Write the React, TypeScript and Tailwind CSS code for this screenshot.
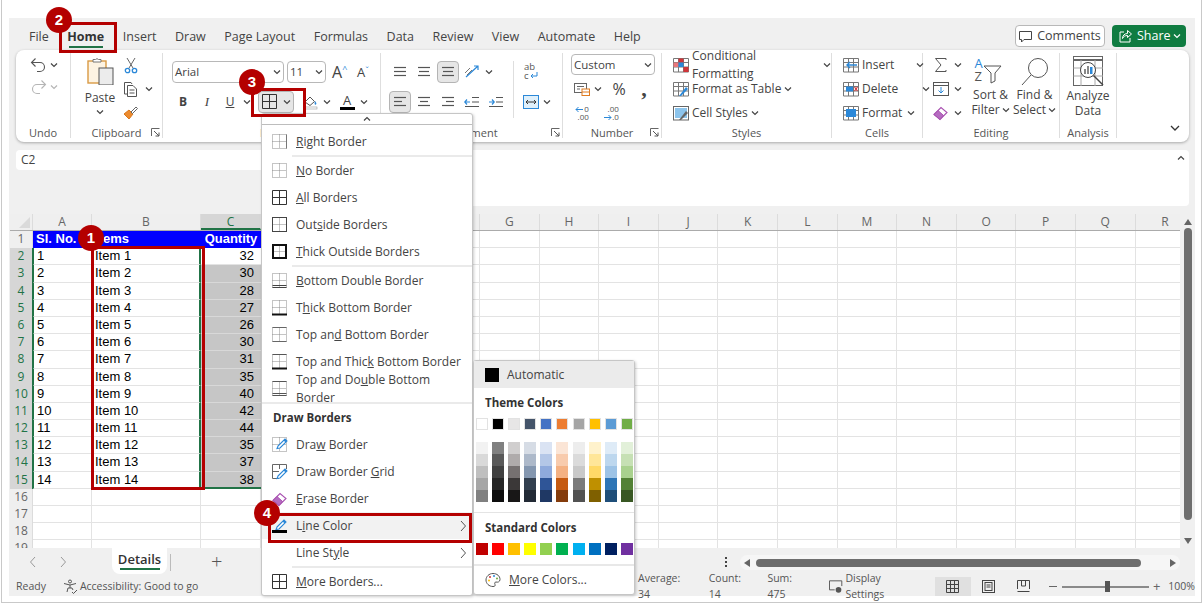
import type { ReactNode } from 'react';

const TABS = ['File', 'Home', 'Insert', 'Draw', 'Page Layout', 'Formulas', 'Data', 'Review', 'View', 'Automate', 'Help'];
const COLUMNS = [
  { name: 'A', width: 'w-[59px]' },
  { name: 'B', width: 'w-[109px]' },
  { name: 'C', width: 'w-[60px]' },
  { name: '', width: 'w-[219px]' },
  ...'GHIJKLMNOPQR'.split('').map((name) => ({ name, width: 'w-[59.6px]' })),
];
const QUANTITIES = [32, 30, 28, 27, 26, 30, 31, 35, 40, 42, 44, 35, 37, 38];

const THEME = ['#ffffff', '#000000', '#e7e6e6', '#44546a', '#4472c4', '#ed7d31', '#a5a5a5', '#ffc000', '#5b9bd5', '#70ad47'];
const SHADES = [
  ['#f2f2f2', '#d9d9d9', '#bfbfbf', '#a6a6a6', '#808080'],
  ['#808080', '#595959', '#404040', '#262626', '#0d0d0d'],
  ['#d0cece', '#afabab', '#767171', '#3b3838', '#181717'],
  ['#d6dce5', '#adb9ca', '#8497b0', '#323f4f', '#222a35'],
  ['#dae3f3', '#b4c7e7', '#8faadc', '#2f5597', '#1f3864'],
  ['#fbe5d6', '#f8cbad', '#f4b183', '#c55a11', '#843c0c'],
  ['#ededed', '#dbdbdb', '#c9c9c9', '#7b7b7b', '#525252'],
  ['#fff2cc', '#ffe699', '#ffd966', '#bf9000', '#7f6000'],
  ['#deebf7', '#bdd7ee', '#9dc3e6', '#2e75b6', '#1f4e79'],
  ['#e2f0d9', '#c6e0b4', '#a9d18e', '#538135', '#385723'],
];
const STANDARD = ['#c00000', '#ff0000', '#ffc000', '#ffff00', '#92d050', '#00b050', '#00b0f0', '#0070c0', '#002060', '#7030a0'];

const Chev = ({ dir = 'down', color = '#444' }: { dir?: 'down' | 'up' | 'right'; color?: string }) => {
  const d = dir === 'down' ? 'M1 2.5 4 5.5 7 2.5' : dir === 'up' ? 'M1 5.5 4 2.5 7 5.5' : 'M2.5 1 5.5 4 2.5 7';
  return (
    <svg width="8" height="8" viewBox="0 0 8 8" className="shrink-0">
      <path d={d} stroke={color} strokeWidth="1.2" fill="none" />
    </svg>
  );
};

const Launcher = () => (
  <svg width="9" height="9" viewBox="0 0 9 9">
    <path d="M.5 8V.5H8.5" stroke="#666" fill="none" />
    <path d="M3 3 8 8M8 4.5V8H4.5" stroke="#555" fill="none" />
  </svg>
);

const Dotted = ({ cross = true, box = true }: { cross?: boolean; box?: boolean }) => (
  <g stroke="#8a8a8a" strokeDasharray="1 1" fill="none">
    {box && <rect x=".5" y=".5" width="14" height="14" />}
    {cross && <path d="M7.5 .5V14.5M.5 7.5H14.5" />}
  </g>
);

const Pencil = ({ x = 0, y = 0 }: { x?: number; y?: number }) => (
  <g transform={`translate(${x} ${y})`}>
    <path d="M1 9 8 2l2 2-7 7-3 .6z" fill="#fff" stroke="#2b88d8" strokeWidth="1.1" />
    <path d="M6.6 3.4l2 2L10 4 8 2z" fill="#2b88d8" />
  </g>
);

const Eraser = () => (
  <svg width="16" height="16" viewBox="0 0 16 16">
    <path d="M1 9.5 8 2.5l6 5-7 7z" fill="#fff" stroke="#a84fb0" strokeWidth="1.1" />
    <path d="M1 9.5 5 5.5l5.5 5L7 14.5z" fill="#b56cc0" stroke="#a84fb0" />
  </svg>
);

const BorderIcon = ({ kind }: { kind: string }) => (
  <svg width="16" height="16" viewBox="0 0 16 16" className="shrink-0">
    {kind === 'right' && (<><Dotted /><path d="M14.5 .5V14.5" stroke="#777" /></>)}
    {kind === 'none' && <Dotted />}
    {kind === 'all' && <path d="M.5 .5H14.5V14.5H.5zM7.5 .5V14.5M.5 7.5H14.5" stroke="#333" fill="none" />}
    {kind === 'outside' && (<><Dotted box={false} /><rect x=".5" y=".5" width="14" height="14" stroke="#444" fill="none" /></>)}
    {kind === 'thick' && (<><Dotted box={false} /><rect x="1" y="1" width="13" height="13" stroke="#111" strokeWidth="2" fill="none" /></>)}
    {kind === 'bdouble' && (<><Dotted /><path d="M.5 12.5H14.5M.5 14.5H14.5" stroke="#444" /></>)}
    {kind === 'bthick' && (<><Dotted /><path d="M0 14.5H15" stroke="#111" strokeWidth="2" /></>)}
    {kind === 'tb' && (<><Dotted /><path d="M.5 .5H14.5M.5 14.5H14.5" stroke="#666" /></>)}
    {kind === 'tbthick' && (<><Dotted /><path d="M.5 .5H14.5" stroke="#555" /><path d="M0 14.5H15" stroke="#111" strokeWidth="2" /></>)}
    {kind === 'tbdouble' && (<><Dotted /><path d="M.5 .5H14.5M.5 12.5H14.5M.5 14.5H14.5" stroke="#555" /></>)}
    {kind === 'draw' && (<><Dotted /><Pencil x={5} y={0} /></>)}
    {kind === 'grid' && (<><path d="M.5 .5H14.5V14.5H.5zM7.5 .5V14.5M.5 7.5H14.5" stroke="#666" fill="none" /><rect x="7" y="5" width="9" height="11" fill="#fff" /><Pencil x={5} y={3} /></>)}
    {kind === 'color' && (<><Pencil x={4} y={0} /><rect x="0" y="12" width="15" height="3" fill="#000" /></>)}
  </svg>
);

const CellGridIcon = ({ children }: { children?: ReactNode }) => (
  <svg width="16" height="16" viewBox="0 0 16 16" className="shrink-0">
    <path d="M.5 1.5H15.5V15H.5zM.5 5.5H15.5M.5 10H15.5M5.5 1.5V15M10.5 1.5V15" stroke="#777" fill="none" />
    {children}
  </svg>
);

const Badge = ({ n, className }: { n: number; className: string }) => (
  <div className={`absolute flex h-[26px] w-[26px] items-center justify-center rounded-full bg-[#b40000] text-[15px] font-bold text-white font-['Liberation_Sans',sans-serif] ${className}`}>{n}</div>
);

const Slot = ({ w = 'w-[22px]', h = 'h-[22px]', active, children }: { w?: string; h?: string; active?: boolean; children: ReactNode }) => (
  <div className={`flex shrink-0 items-center justify-center rounded ${w} ${h} ${active ? 'border border-[#b4b4b4] bg-[#e6e6e6]' : ''}`}>{children}</div>
);

const Group = ({ width, label, launcher, className = '', children }: { width: string; label: string; launcher?: boolean; className?: string; children: ReactNode }) => (
  <div className={`relative flex h-[85px] shrink-0 flex-col border-r border-[#dedede] ${width}`}>
    <div className={`flex-1 ${className}`}>{children}</div>
    <div className="h-[10px] text-center text-[11px] leading-[10px] text-[#555]">{label}</div>
    {launcher && <div className="absolute bottom-[1px] right-[2px]"><Launcher /></div>}
  </div>
);

const Lines = ({ rows }: { rows: [number, number][] }) => (
  <svg width="16" height="16" viewBox="0 0 16 16">
    {rows.map(([x1, x2], i) => (
      <path key={i} d={`M${x1} ${3.5 + i * 4}H${x2}`} stroke="#555" strokeWidth="1.2" />
    ))}
  </svg>
);

const Select = ({ label, width, height = 'h-[22px]' }: { label: string; width: string; height?: string }) => (
  <div className={`flex shrink-0 items-center justify-between rounded-[4px] border border-[#b8b8b8] bg-white pl-[2px] pr-[2px] text-[11.5px] text-[#444] ${width} ${height}`}>
    <span>{label}</span>
    <Chev />
  </div>
);

const StyleRow = ({ icon, label, gap = 'ml-[3px]' }: { icon: ReactNode; label: string; gap?: string }) => (
  <div className="flex h-[24px] items-center text-[12px] text-[#444]">
    {icon}
    <span className="ml-[3px]">{label}</span>
    <span className={`${gap} flex`}><Chev /></span>
  </div>
);

const Ribbon = () => (
  <div className="ml-[7px] flex h-[92px] w-[1173px] items-start rounded-lg bg-white pt-[3px] shadow-[0_1px_3px_rgba(0,0,0,0.3)]">
    <Group width="w-[55px]" label="Undo" className="pt-[1px] pl-[14px]">
      <div className="flex h-[22px] items-center gap-[3px]">
        <svg width="17" height="17" viewBox="0 0 17 17"><path d="M5.5 1.5 1.5 5.5l4 4M1.5 5.5H10a4.5 4.5 0 0 1 0 9H7" stroke="#555" strokeWidth="1.1" fill="none" /></svg>
        <Chev />
      </div>
      <div className="flex h-[22px] items-center gap-[3px]">
        <svg width="17" height="17" viewBox="0 0 17 17"><path d="M11.5 1.5l4 4-4 4M15.5 5.5H7a4.5 4.5 0 0 0 0 9h3" stroke="#b5b5b5" strokeWidth="1.1" fill="none" /></svg>
        <Chev color="#b5b5b5" />
      </div>
    </Group>

    <Group width="w-[92px]" label="Clipboard" launcher className="flex pl-[6px]">
      <div className="flex w-[46px] flex-col items-center pt-[4px] text-[12px] leading-[15px] text-[#444]">
        <svg width="27" height="28" viewBox="0 0 27 28">
          <rect x="1" y="4" width="18" height="22" fill="#fdf3e2" stroke="#d99a45" strokeWidth="1.4" />
          <path d="M6 5V2.5h2.5a2 2 0 0 1 3 0H14V5z" fill="#fff" stroke="#777" />
          <rect x="12" y="11" width="14" height="17" fill="#ececec" stroke="#555" />
        </svg>
        <span className="mt-[5px]">Paste</span>
        <span className="mt-[3px]"><Chev /></span>
      </div>
      <div className="flex flex-col">
        <div className="flex h-[24px] w-[16px] items-center justify-center">
          <svg width="14" height="17" viewBox="0 0 14 17"><path d="M3 1l6 10M11 1 5 11" stroke="#666" fill="none" /><circle cx="3.5" cy="13.5" r="2.2" stroke="#2b88d8" strokeWidth="1.3" fill="none" /><circle cx="10.5" cy="13.5" r="2.2" stroke="#2b88d8" strokeWidth="1.3" fill="none" /></svg>
        </div>
        <div className="flex h-[24px] items-center gap-[6px]">
          <svg width="16" height="17" viewBox="0 0 16 17"><path d="M4 13H1.5V1.5H8L9 3" stroke="#555" fill="none" /><path d="M4.5 4.5H10L13.5 8V15.5H4.5zM6.5 9h5M6.5 12h5" stroke="#555" fill="#fff" /></svg>
          <Chev />
        </div>
        <div className="flex h-[24px] w-[16px] items-center justify-center">
          <svg width="16" height="16" viewBox="0 0 16 16"><path d="M1 9l5 5 4-5-4-4z" fill="#ed8b2e" stroke="#d9761a" /><path d="M8 7l5-5 1.5 1.5-5 5z" fill="#fff" stroke="#666" /></svg>
        </div>
      </div>
    </Group>

    <Group width="w-[218px]" label="Font" className="pl-[9px] pt-[8px]">
      <div className="flex h-[22px] items-center">
        <Select label="Arial" width="w-[112px]" />
        <span className="ml-[3px]"><Select label="11" width="w-[39px]" /></span>
        <span className="ml-[6px] flex w-[22px] items-start text-[16px] leading-none text-[#444]">A<span className="text-[9px] text-[#2b88d8]">^</span></span>
        <span className="ml-[3px] flex w-[22px] items-start text-[13px] leading-none text-[#444]">A<span className="text-[9px] text-[#2b88d8]">ˇ</span></span>
      </div>
      <div className="mt-[8px] flex h-[22px] items-center">
        <Slot><span className="text-[12px] font-bold text-[#444]">B</span></Slot>
        <span className="w-[2px]" />
        <Slot><span className="font-['Liberation_Serif',serif] text-[13px] italic text-[#444]">I</span></Slot>
        <span className="w-[1px]" />
        <Slot><span className="text-[12px] text-[#444] underline">U</span></Slot>
        <span className="ml-[2px] mr-[7px] flex"><Chev /></span>
        <div className="flex h-[22px] w-[36px] items-center justify-center gap-[5px] rounded border border-[#b4b4b4] bg-[#e6e6e6]">
          <BorderIcon kind="all" />
          <Chev />
        </div>
        <span className="w-[6px]" />
        <Slot>
          <svg width="16" height="16" viewBox="0 0 16 16"><path d="M2 8l5-5 4.5 4.5L7 11.5z" fill="#fff" stroke="#555" /><path d="M12 7c1 1.5 2 2.5 1 3.5s-2-.5-1-3.5z" fill="#2b88d8" /><rect x="1" y="13" width="13" height="2" fill="#fff" stroke="#999" strokeWidth=".6" /></svg>
        </Slot>
        <span className="flex w-[10px] justify-center"><Chev /></span>
        <span className="w-[4px]" />
        <Slot>
          <div className="flex flex-col items-center leading-none">
            <span className="text-[13px] leading-[12px] text-[#444]">A</span>
            <span className="mt-[1px] h-[3px] w-[15px] bg-black" />
          </div>
        </Slot>
        <span className="ml-[2px] flex"><Chev /></span>
      </div>
    </Group>

    <Group width="w-[182px]" label="Alignment" launcher className="flex pl-[8px] pt-[8px]">
      <div className="h-[57px] w-[125px] border-r border-[#dedede]">
        <div className="flex h-[22px] items-center gap-[2px]">
          <Slot><Lines rows={[[2, 14], [2, 14], [2, 14]]} /></Slot>
          <Slot><Lines rows={[[2, 14], [3, 13], [2, 14]]} /></Slot>
          <Slot active><Lines rows={[[2, 14], [3, 13], [2, 14]]} /></Slot>
          <Slot>
            <svg width="18" height="16" viewBox="0 0 18 16"><path d="M3 13 15 2M11 2h4v4" stroke="#2b88d8" strokeWidth="1.2" fill="none" /><path d="M2 9 7 4M4 11l5-5" stroke="#777" /></svg>
          </Slot>
          <Chev />
        </div>
        <div className="mt-[8px] flex h-[22px] items-center gap-[2px]">
          <Slot active><Lines rows={[[2, 14], [2, 10], [2, 14]]} /></Slot>
          <Slot><Lines rows={[[2, 14], [4, 12], [2, 14]]} /></Slot>
          <Slot><Lines rows={[[2, 14], [6, 14], [2, 14]]} /></Slot>
          <Slot>
            <svg width="16" height="16" viewBox="0 0 16 16"><path d="M8 3.5H15M8 8H15M1 12.5H15" stroke="#555" /><path d="M6 8H1M3 5.5 .8 8 3 10.5" stroke="#2b88d8" fill="none" strokeWidth="1.2" /></svg>
          </Slot>
          <Slot>
            <svg width="16" height="16" viewBox="0 0 16 16"><path d="M8 3.5H15M8 8H15M1 12.5H15" stroke="#555" /><path d="M1 8H6M4 5.5 6.2 8 4 10.5" stroke="#2b88d8" fill="none" strokeWidth="1.2" /></svg>
          </Slot>
        </div>
      </div>
      <div className="pl-[6px]">
        <Slot>
          <div className="relative flex h-[22px] w-[18px] flex-col text-[9.5px] leading-[8px] text-[#555]">
            <span className="pt-[2px] pl-[2px]">ab</span>
            <span className="flex items-center pt-[1px] pl-[2px]">c<svg width="9" height="8" viewBox="0 0 9 8"><path d="M8 0V4H2M4 2 2 4l2 2" stroke="#2b88d8" fill="none" /></svg></span>
          </div>
        </Slot>
        <div className="mt-[8px] flex h-[22px] items-center gap-[1px]">
          <Slot>
            <svg width="16" height="16" viewBox="0 0 16 16"><rect x=".5" y="1.5" width="15" height="13" fill="#dff0fb" stroke="#2b88d8" /><path d="M3 8h10M5 6 3 8l2 2M11 6l2 2-2 2" stroke="#333" fill="none" /></svg>
          </Slot>
          <Chev />
        </div>
      </div>
    </Group>

    <Group width="w-[99px]" label="Number" launcher className="pl-[8px] pt-[1px]">
      <Select label="Custom" width="w-[84px]" height="h-[21px]" />
      <div className="mt-[2px] flex h-[24px] items-center">
        <Slot>
          <svg width="16" height="14" viewBox="0 0 16 14"><rect x=".5" y="1.5" width="12" height="9" fill="none" stroke="#666" /><rect x="8" y="7" width="7.5" height="6.5" fill="#fff" stroke="#e07b1f" /><path d="M8 10h7" stroke="#e07b1f" /><path d="M3 4.500h7M3 7h3" stroke="#666" /></svg>
        </Slot>
        <span className="flex w-[10px] justify-center"><Chev /></span>
        <span className="ml-[5px]"><Slot><span className="text-[16px] text-[#444]">%</span></Slot></span>
        <span className="ml-[3px]"><Slot><span className="font-['Liberation_Serif',serif] text-[22px] font-bold leading-[12px] text-[#444]">,</span></Slot></span>
      </div>
      <div className="flex h-[24px] items-center gap-[7px]">
        <Slot>
          <div className="flex flex-col items-end text-[8px] leading-[8px] text-[#555]">
            <span className="flex items-center"><svg width="9" height="7" viewBox="0 0 9 7"><path d="M8 3.500H1M3.500 1 1 3.500 3.500 6" stroke="#2b88d8" fill="none" /></svg>0</span>
            <span>.00</span>
          </div>
        </Slot>
        <Slot>
          <div className="flex flex-col items-end text-[8px] leading-[8px] text-[#555]">
            <span>.00</span>
            <span className="flex items-center"><svg width="9" height="7" viewBox="0 0 9 7"><path d="M1 3.500H8M5.500 1 8 3.500 5.500 6" stroke="#2b88d8" fill="none" /></svg>.0</span>
          </div>
        </Slot>
      </div>
    </Group>

    <Group width="w-[170px]" label="Styles" className="pl-[11px]">
      <StyleRow label="Conditional Formatting" icon={<CellGridIcon><rect x="5.5" y="1.5" width="5" height="4" fill="#d13438" /><rect x=".5" y="5.5" width="5" height="4.5" fill="#e8767a" /><rect x="10.5" y="10" width="5" height="5" fill="#d13438" /><rect x="5.5" y="5.5" width="5" height="4.5" fill="#2b88d8" /></CellGridIcon>} />
      <StyleRow label="Format as Table" icon={<CellGridIcon><path d="M6 15 13 6l2 2-7 7z" fill="#2b88d8" /></CellGridIcon>} />
      <StyleRow label="Cell Styles" icon={<svg width="16" height="16" viewBox="0 0 16 16"><rect x=".5" y="1.5" width="15" height="13.5" fill="#fff" stroke="#666" /><rect x="2" y="3" width="12" height="10" fill="#8cc4ec" /><path d="M6 15 13 6l2 2-7 7z" fill="#666" /></svg>} />
    </Group>

    <Group width="w-[91px]" label="Cells" className="pl-[11px]">
      <StyleRow label="Insert" gap="ml-[22px]" icon={<CellGridIcon><path d="M14 8H4M7 5 4 8l3 3" stroke="#2b88d8" strokeWidth="1.4" fill="none" /></CellGridIcon>} />
      <StyleRow label="Delete" gap="ml-[24px]" icon={<CellGridIcon><rect x="3" y="5.5" width="7" height="5" fill="#2b88d8" /><path d="M11.5 6l3 4M14.5 6l-3 4" stroke="#d13438" strokeWidth="1.2" /></CellGridIcon>} />
      <StyleRow label="Format" gap="ml-[5px]" icon={<CellGridIcon><rect x="3" y="4" width="10" height="8" fill="#2b88d8" /></CellGridIcon>} />
    </Group>

    <Group width="w-[137px]" label="Editing" className="flex pl-[10px] text-[12px] leading-[15px] text-[#444]">
      <div className="flex w-[35px] flex-col">
        <div className="flex h-[24px] items-center gap-[5px]">
          <svg width="16" height="16" viewBox="0 0 16 16"><path d="M13 3V1.500H2.500L8 8l-5.500 6.500H13V13" stroke="#555" fill="none" /></svg>
          <Chev />
        </div>
        <div className="flex h-[24px] items-center gap-[5px]">
          <svg width="16" height="16" viewBox="0 0 16 16"><rect x=".5" y="1.5" width="15" height="13" fill="none" stroke="#555" /><path d="M.5 4.5H15.5" stroke="#555" /><path d="M8 6v6M5.500 9.500 8 12l2.500-2.500" stroke="#2b88d8" fill="none" /></svg>
          <Chev />
        </div>
        <div className="flex h-[24px] items-center gap-[5px]">
          <Eraser />
          <Chev />
        </div>
      </div>
      <div className="flex w-[45px] flex-col items-center pt-[4px]">
        <div className="flex h-[30px] w-[32px] items-start">
          <div className="flex flex-col text-[13px] leading-[13px]">
            <span className="text-[#2b88d8]">A</span>
            <span className="text-[#555]">Z</span>
          </div>
          <svg width="20" height="20" viewBox="0 0 20 20" className="mt-[7px]"><path d="M1 2H18L12 9V17L8 19V9z" fill="none" stroke="#555" /></svg>
        </div>
        <span>Sort &amp;</span>
        <span className="flex items-center gap-[2px]">Filter <Chev /></span>
      </div>
      <div className="flex w-[43px] flex-col items-center pt-[4px]">
        <svg width="30" height="30" viewBox="0 0 30 30"><circle cx="18" cy="11" r="9.5" fill="none" stroke="#555" /><path d="M11 18 2 28" stroke="#555" /></svg>
        <span>Find &amp;</span>
        <span className="flex items-center gap-[2px]">Select <Chev /></span>
      </div>
    </Group>

    <Group width="w-[57px]" label="Analysis" className="flex flex-col items-center pt-[3px] text-[12px] leading-[15px] text-[#444]">
      <svg width="31" height="31" viewBox="0 0 31 31">
        <rect x=".5" y=".5" width="29" height="29" fill="#fff" stroke="#666" />
        <path d="M.5 4H29.5" stroke="#666" strokeWidth="2" />
        <path d="M.5 12H30M.5 20H30M8 4V30M22 4V30" stroke="#aaa" />
        <circle cx="15" cy="14" r="7.5" fill="#fff" stroke="#444" />
        <rect x="11" y="13" width="2" height="5" fill="#888" /><rect x="14" y="10" width="2" height="8" fill="#888" /><rect x="17" y="11" width="2.5" height="7" fill="#2b88d8" />
        <path d="M20.5 19.5 30 29" stroke="#444" strokeWidth="1.4" />
      </svg>
      <span className="mt-[1px]">Analyze</span>
      <span>Data</span>
    </Group>

    <div className="flex h-[85px] flex-1 items-end justify-end pr-[9px] pb-[5px]">
      <svg width="10" height="10" viewBox="0 0 10 10"><path d="M1 3 5 7l4-4" stroke="#333" strokeWidth="1.3" fill="none" /></svg>
    </div>
  </div>
);

const Sheet = () => (
  <div className="mt-[8px] flex h-[334px]">
    <div className="h-full w-[1px] shrink-0" />
    <div className="h-full w-[1170px] overflow-hidden bg-white">
      <div className="flex h-[17px] w-[1200px] border-b border-[#ababab] bg-[#efefef] text-[12px] leading-[16px] text-[#666]">
        <div className="flex w-[23px] shrink-0 items-end justify-end border-r border-[#dcdcdc] pr-[2px] pb-[2px]">
          <svg width="11" height="11" viewBox="0 0 11 11"><path d="M11 0V11H0z" fill="#dadada" /></svg>
        </div>
        {COLUMNS.map((c) => (
          <div key={c.name} className={`${c.width} shrink-0 border-r border-[#dcdcdc] text-center ${c.name === 'C' ? 'border-b-2 border-b-[#217346] bg-[#d6d6d6] text-[#217346]' : ''}`}>{c.name}</div>
        ))}
      </div>
      {Array.from({ length: 19 }, (_, i) => {
        const row = i + 1;
        const selected = row >= 2 && row <= 15;
        const header = row === 1;
        return (
          <div key={row} className="flex h-[17.2px] w-[1200px] font-['Liberation_Sans',Arial,sans-serif] text-[13px] leading-[16px] text-black">
            <div className={`w-[23px] shrink-0 border-r text-center font-['Open_Sans',sans-serif] text-[12px] ${selected ? 'border-r-[#217346] bg-[#d6d6d6] text-[#217346]' : 'border-r-[#dcdcdc] bg-[#efefef] text-[#666]'}`}>{row}</div>
            {COLUMNS.map((c, ci) => {
              let tone = 'border-b border-r border-[#e3e3e3]';
              if (header && ci < 3) tone = 'bg-[#0000ff] text-white font-bold';
              if (ci === 0 && selected) tone = 'border-b border-r border-[#e3e3e3] border-l border-l-[#217346]';
              if (ci === 1 && selected) tone = 'border-b border-r-2 border-[#e3e3e3] border-r-[#217346]';
              if (ci === 2 && selected) tone = row === 2 ? 'border-b border-[#e3e3e3]' : 'bg-[#c6c6c6] border-b border-[#d8d8d8]';
              if (ci === 2 && row === 15) tone = 'bg-[#c6c6c6] border-b-2 border-[#217346]';
              let text: string | number = '';
              if (header) text = ['Sl. No.', 'Items', 'Quantity'][ci] ?? '';
              else if (selected && ci === 0) text = row - 1;
              else if (selected && ci === 1) text = `Item ${row - 1}`;
              else if (selected && ci === 2) text = QUANTITIES[row - 2];
              const align = ci === 2 ? (header ? 'text-center' : 'pr-[7px] text-right') : 'pl-[3px]';
              return <div key={c.name} className={`${c.width} shrink-0 ${align} ${tone}`}>{text}</div>;
            })}
          </div>
        );
      })}
    </div>
    <div className="flex h-full w-[15px] flex-col items-center">
      <div className="mt-[5px] h-0 w-0 border-x-[4px] border-b-[6px] border-x-transparent border-b-[#666]" />
      <div className="mt-[3px] h-[292px] w-[8px] rounded-full bg-[#6e6e6e]" />
      <div className="mt-auto mb-[4px] h-0 w-0 border-x-[4px] border-t-[6px] border-x-transparent border-t-[#666]" />
    </div>
  </div>
);

const TabBar = () => (
  <div className="flex h-[29px] items-start">
    <div className="flex h-[28px] w-[731px] shrink-0 items-center">
      <span className="ml-[20px] flex"><svg width="8" height="12" viewBox="0 0 8 12"><path d="M6 1 1.5 6 6 11" stroke="#999" fill="none" /></svg></span>
      <span className="ml-[22px] flex"><svg width="8" height="12" viewBox="0 0 8 12"><path d="M2 1l4.5 5L2 11" stroke="#999" fill="none" /></svg></span>
      <div className="ml-[45px] flex h-[26px] w-[55px] -translate-y-px flex-col items-center rounded-b-lg bg-white pt-[3px] text-[13px] font-semibold leading-[16px] text-[#333]">
        Details
        <span className="mt-[1px] h-[2px] w-[40px] bg-[#217346]" />
      </div>
      <span className="ml-[3px] h-[17px] w-px bg-[#bbb]" />
      <span className="ml-[40px] text-[20px] font-light leading-none text-[#555]">+</span>
      <div className="ml-auto mr-[13px] flex flex-col gap-[2px]">
        <span className="h-[2px] w-[2px] bg-[#444]" />
        <span className="h-[2px] w-[2px] bg-[#444]" />
        <span className="h-[2px] w-[2px] bg-[#444]" />
      </div>
    </div>
    <div className="mt-[7px] flex h-[15px] w-[440px] items-center rounded-full bg-[#f6f6f6] px-[4px]">
      <div className="h-0 w-0 border-y-[4px] border-r-[6px] border-y-transparent border-r-[#666]" />
      <div className="ml-[6px] h-[8px] w-[385px] rounded-full bg-[#6e6e6e]" />
      <div className="ml-auto h-0 w-0 border-y-[4px] border-l-[6px] border-y-transparent border-l-[#666]" />
    </div>
  </div>
);

const StatusBar = () => (
  <div className="flex h-[19px] items-center text-[10.5px] text-[#555]">
    <span className="ml-[7px]">Ready</span>
    <span className="ml-[17px] flex items-center gap-[2px]">
      <svg width="15" height="15" viewBox="0 0 15 15"><circle cx="7" cy="2.5" r="1.5" fill="none" stroke="#555" /><path d="M1 4.500 7 6l6-1.500M7 6v3M4 13l1-4h4l1 2M9 13l1.500 1.500L14 11" stroke="#555" fill="none" /></svg>
      Accessibility: Good to go
    </span>
    <div className="ml-auto flex h-full w-[557px] items-center">
      <span>Average:&nbsp; 34</span>
      <span className="ml-[14px]">Count: 14</span>
      <span className="ml-[14px]">Sum:&nbsp; 475</span>
      <span className="ml-[16px] flex items-center gap-[2px]">
        <svg width="15" height="14" viewBox="0 0 15 14"><path d="M6 10H.5V.5H13.5V6" stroke="#555" fill="none" /><circle cx="10" cy="10" r="3" fill="#555" /></svg>
        Display Settings
      </span>
      <div className="ml-[16px] flex h-full w-[38px] items-center justify-center bg-[#e0e0e0]">
        <svg width="13" height="13" viewBox="0 0 13 13"><path d="M.5 .5H12.5V12.5H.5zM4.500 .5V12.500M8.500 .5V12.500M.5 4.500H12.500M.5 8.500H12.500" stroke="#444" fill="none" /></svg>
      </div>
      <div className="flex w-[37px] justify-center">
        <svg width="13" height="13" viewBox="0 0 13 13"><rect x=".5" y=".5" width="12" height="12" stroke="#444" fill="none" /><rect x="3" y="2.5" width="7" height="8" stroke="#444" fill="none" /><path d="M4.500 5H8.500M4.500 7H8.500" stroke="#444" /></svg>
      </div>
      <div className="flex w-[37px] justify-center">
        <svg width="13" height="13" viewBox="0 0 13 13"><path d="M.5 9V.5H12.500V9M.5 11.500H12.500M4.500 .5V6H8.500V.5" stroke="#444" fill="none" /></svg>
      </div>
      <span className="ml-[8px] h-px w-[8px] bg-[#666]" />
      <div className="relative ml-[5px] h-[2px] w-[92px] bg-[#8a8a8a]">
        <span className="absolute left-[43px] top-[-5px] h-[11px] w-[5px] bg-[#555]" />
      </div>
      <span className="ml-[4px] text-[13px] leading-none text-[#666]">+</span>
      <span className="ml-[8px]">100%</span>
    </div>
  </div>
);

const Underlined = ({ label }: { label: string }) => {
  const [before, after] = label.split('&');
  if (after === undefined) return <>{label}</>;
  return (<>{before}<u>{after[0]}</u>{after.slice(1)}</>);
};

const MenuItem = ({ kind, label, hover, arrow }: { kind?: string; label: string; hover?: boolean; arrow?: boolean }) => (
  <div className={`flex h-[27px] shrink-0 items-center pl-[10px] pr-[5px] text-[12px] text-[#444] ${hover ? 'bg-[#f2f2f2]' : ''}`}>
    <span className="flex w-[24px] shrink-0">
      {kind === 'erase' ? <Eraser /> : kind ? <BorderIcon kind={kind} /> : null}
    </span>
    <span><Underlined label={label} /></span>
    {arrow && <span className="ml-auto"><svg width="8" height="12" viewBox="0 0 8 12"><path d="M2 1l4.500 5L2 11" stroke="#555" fill="none" /></svg></span>}
  </div>
);

const MenuSep = ({ full }: { full?: boolean }) => (
  <div className={`h-[2px] shrink-0 bg-[#eaeaea] ${full ? '' : 'ml-[30px]'}`} />
);

const BorderMenu = () => (
  <div className="absolute left-[261px] top-[113px] flex h-[483px] w-[212px] flex-col rounded-[3px] border border-[#c6c6c6] bg-white font-['Open_Sans',sans-serif] shadow-[1px_1px_3px_rgba(0,0,0,0.2)]">
    <div className="flex h-[11px] shrink-0 items-center justify-center border-b border-[#bdbdbd]"><Chev dir="up" /></div>
    <div className="h-[3px] shrink-0" />
    <MenuItem kind="right" label="&Right Border" />
    <MenuSep />
    <MenuItem kind="none" label="&No Border" />
    <MenuItem kind="all" label="&All Borders" />
    <MenuItem kind="outside" label="Out&side Borders" />
    <MenuItem kind="thick" label="&Thick Outside Borders" />
    <MenuSep />
    <MenuItem kind="bdouble" label="&Bottom Double Border" />
    <MenuItem kind="bthick" label="T&hick Bottom Border" />
    <MenuItem kind="tb" label="Top an&d Bottom Border" />
    <MenuItem kind="tbthick" label="Top and Thic&k Bottom Border" />
    <MenuItem kind="tbdouble" label="Top and Do&uble Bottom Border" />
    <MenuSep full />
    <div className="flex h-[27px] shrink-0 items-center pl-[11px] text-[11.5px] font-bold text-[#333]">Draw Borders</div>
    <MenuItem kind="draw" label="Dra&w Border" />
    <MenuItem kind="grid" label="Draw Border &Grid" />
    <MenuItem kind="erase" label="&Erase Border" />
    <MenuItem kind="color" label="L&ine Color" hover arrow />
    <MenuItem label="Line St&yle" arrow />
    <MenuSep />
    <MenuItem kind="all" label="&More Borders..." />
  </div>
);

const ColorMenu = () => (
  <div className="absolute left-[473px] top-[360px] h-[235px] w-[162px] rounded-[3px] border border-[#c6c6c6] bg-white font-['Open_Sans',sans-serif] text-[12px] text-[#444] shadow-[1px_1px_3px_rgba(0,0,0,0.2)]">
    <div className="flex h-[27px] items-center bg-[#ebebeb] pl-[11px]">
      <span className="h-[14px] w-[14px] bg-black" />
      <span className="ml-[8px]">Automatic</span>
    </div>
    <div className="flex h-[30px] items-center pl-[11px] text-[11.5px] font-bold text-[#333]">Theme Colors</div>
    <div className="ml-[2px] flex gap-[4.1px]">
      {THEME.map((c) => <span key={c} className="h-[12px] w-[12px] shrink-0 border border-[#e2e2e2]" style={{ backgroundColor: c }} />)}
    </div>
    <div className="ml-[2px] mt-[12px] flex gap-[4.1px]">
      {SHADES.map((col, i) => (
        <div key={i} className="flex w-[12px] shrink-0 flex-col">
          {col.map((c, j) => <span key={j} className="h-[12px] w-[12px]" style={{ backgroundColor: c }} />)}
        </div>
      ))}
    </div>
    <div className="mt-[10px] h-[1px] bg-[#e4e4e4]" />
    <div className="flex h-[30px] items-center pl-[11px] text-[11.5px] font-bold text-[#333]">Standard Colors</div>
    <div className="ml-[2px] flex gap-[4.1px]">
      {STANDARD.map((c) => <span key={c} className="h-[12px] w-[12px] shrink-0" style={{ backgroundColor: c }} />)}
    </div>
    <div className="mt-[9px] h-[2px] bg-[#e8e8e8]" />
    <div className="flex h-[27px] items-center pl-[11px]">
      <svg width="16" height="16" viewBox="0 0 16 16">
        <path d="M8 1.5c4 0 7 2.5 7 6 0 2.5-2.5 3-4 2.5-1.5 0-1.5 1.5-1 2.5.5 1.5-.5 2-2 2-4 0-7-3-7-6.500s3-6.500 7-6.500z" fill="none" stroke="#555" />
        <circle cx="5" cy="5" r="1" fill="#d13438" /><circle cx="9" cy="4" r="1" fill="#2b88d8" /><circle cx="12" cy="6.5" r="1" fill="#70ad47" /><circle cx="4" cy="8.5" r="1" fill="#ffc000" />
      </svg>
      <span className="ml-[8px]"><Underlined label="&More Colors..." /></span>
    </div>
  </div>
);

export default function App() {
  return (
    <div className="relative h-[604px] w-[1203px] overflow-hidden bg-white font-['Open_Sans',sans-serif]">
      <div className="ml-[1px] h-[603px] w-[1201px] border-x border-b border-[#c9c9c9] pl-[7px] pt-[18px]">
        <div className="h-[578px] w-[1186px] bg-[#f0f0f0]">
          <div className="flex h-[32px] items-start">
            <div className="flex gap-[18.5px] pl-[20px] pt-[10px] text-[12.5px] leading-[18px] text-[#444]">
              {TABS.map((t) => (
                <div key={t} className={`flex flex-col items-center ${t === 'Home' ? 'font-bold text-[#333]' : ''}`}>
                  {t}
                  {t === 'Home' && <span className="h-[2px] w-[34px] bg-[#217346]" />}
                </div>
              ))}
            </div>
            <div className="ml-auto flex gap-[7px] pr-[9px] pt-[7px]">
              <div className="flex h-[22px] w-[90px] items-center justify-center gap-[5px] rounded-[4px] border border-[#b8b8b8] bg-white text-[12.5px] text-[#444]">
                <svg width="13" height="13" viewBox="0 0 13 13"><path d="M.5 1.5H12.5V9.5H5L2.5 12V9.5H.5z" stroke="#444" fill="none" /></svg>
                Comments
              </div>
              <div className="flex h-[22px] w-[74px] items-center rounded-[4px] bg-[#107c41] pl-[7px] text-[12.5px] text-white">
                <svg width="14" height="14" viewBox="0 0 14 14"><path d="M8.5 1.5l4 3.5-4 3.500V6.500C6 6.500 4.500 7.500 3.500 9.500c0-3 2-5 5-5zM5 3H1V13H11V9" stroke="#fff" fill="none" /></svg>
                <span className="ml-[4px]">Share</span>
                <span className="ml-auto mr-[5px] flex"><Chev color="#fff" /></span>
              </div>
            </div>
          </div>
          <Ribbon />
          <div className="ml-[7px] mt-[8px] flex h-[56px] w-[1173px] items-start gap-[2px]">
            <div className="flex h-[20px] w-[320px] items-center rounded bg-white pl-[5px] text-[12px] text-[#444]">C2</div>
            <div className="flex h-full flex-1 justify-end rounded bg-white pr-[4px] pt-[4px]">
              <Chev dir="up" />
            </div>
          </div>
          <Sheet />
          <TabBar />
          <StatusBar />
        </div>
      </div>

      <BorderMenu />
      <ColorMenu />

      <div className="absolute left-[59px] top-[22px] h-[31px] w-[58px] border-[3px] border-[#b40000]" />
      <div className="absolute left-[251px] top-[88px] h-[29px] w-[55px] border-[3px] border-[#b40000]" />
      <div className="absolute left-[91px] top-[246px] h-[244px] w-[114px] border-[3px] border-[#b40000]" />
      <div className="absolute left-[268px] top-[513px] h-[30px] w-[204px] border-[3px] border-[#b40000]" />
      <Badge n={2} className="left-[46px] top-[7px]" />
      <Badge n={3} className="left-[239px] top-[69px]" />
      <Badge n={1} className="left-[78px] top-[225px]" />
      <Badge n={4} className="left-[254px] top-[500px]" />
    </div>
  );
}
